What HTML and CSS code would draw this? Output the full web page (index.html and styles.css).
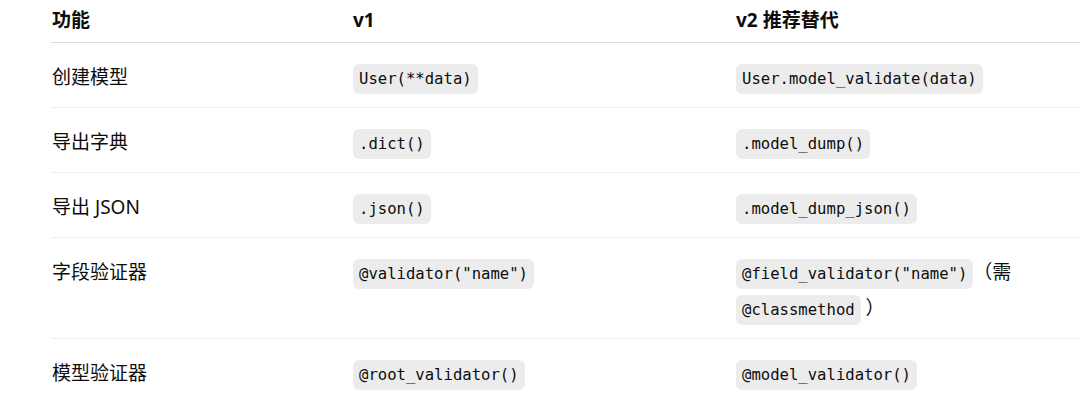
FILE: index.html
```html
<!DOCTYPE html>
<html lang="zh-CN">
<head>
    <meta charset="UTF-8">
    <meta name="viewport" content="width=device-width, initial-scale=1.0">
    <title>Pydantic v1 / v2 对照</title>
    <link rel="stylesheet" href="styles.css">
</head>
<body>
    <table class="compare">
        <colgroup>
            <col class="col-feature">
            <col class="col-v1">
            <col class="col-v2">
        </colgroup>
        <thead>
            <tr>
                <th>功能</th>
                <th>v1</th>
                <th>v2 推荐替代</th>
            </tr>
        </thead>
        <tbody>
            <tr>
                <td>创建模型</td>
                <td><code>User(**data)</code></td>
                <td><code>User.model_validate(data)</code></td>
            </tr>
            <tr>
                <td>导出字典</td>
                <td><code>.dict()</code></td>
                <td><code>.model_dump()</code></td>
            </tr>
            <tr>
                <td>导出 JSON</td>
                <td><code>.json()</code></td>
                <td><code>.model_dump_json()</code></td>
            </tr>
            <tr>
                <td>字段验证器</td>
                <td><code>@validator("name")</code></td>
                <td><code>@field_validator("name")</code>（需<code>@classmethod</code> ）</td>
            </tr>
            <tr>
                <td>模型验证器</td>
                <td><code>@root_validator()</code></td>
                <td><code>@model_validator()</code></td>
            </tr>
        </tbody>
    </table>
</body>
</html>
```

FILE: styles.css
```css
body {
    margin: 0;
    padding: 0 0 0 51px;
    background-color: #fff;
    color: #0d0d0d;
    font-family: "Noto Sans", "Noto Sans CJK SC", sans-serif;
    font-size: 19px;
}

.compare {
    width: 1029px;
    border-collapse: collapse;
    table-layout: fixed;
}

.col-feature {
    width: 301px;
}

.col-v1 {
    width: 383px;
}

.compare th,
.compare td {
    text-align: left;
    vertical-align: top;
    line-height: 36px;
    padding: 16px 0 12px 1px;
}

.compare th {
    font-weight: 700;
    padding: 2px 0 4px 1px;
    border-bottom: 1px solid #dcdcdc;
}

.compare td {
    border-bottom: 1px solid #efefef;
}

.compare tbody tr:last-child td {
    border-bottom: none;
}

.compare code {
    font-family: "DejaVu Sans Mono", "Liberation Mono", monospace;
    font-size: 15.6px;
    line-height: 1;
    background-color: #ececec;
    border-radius: 6px;
    padding: 6px;
    color: #0d0d0d;
}
```
